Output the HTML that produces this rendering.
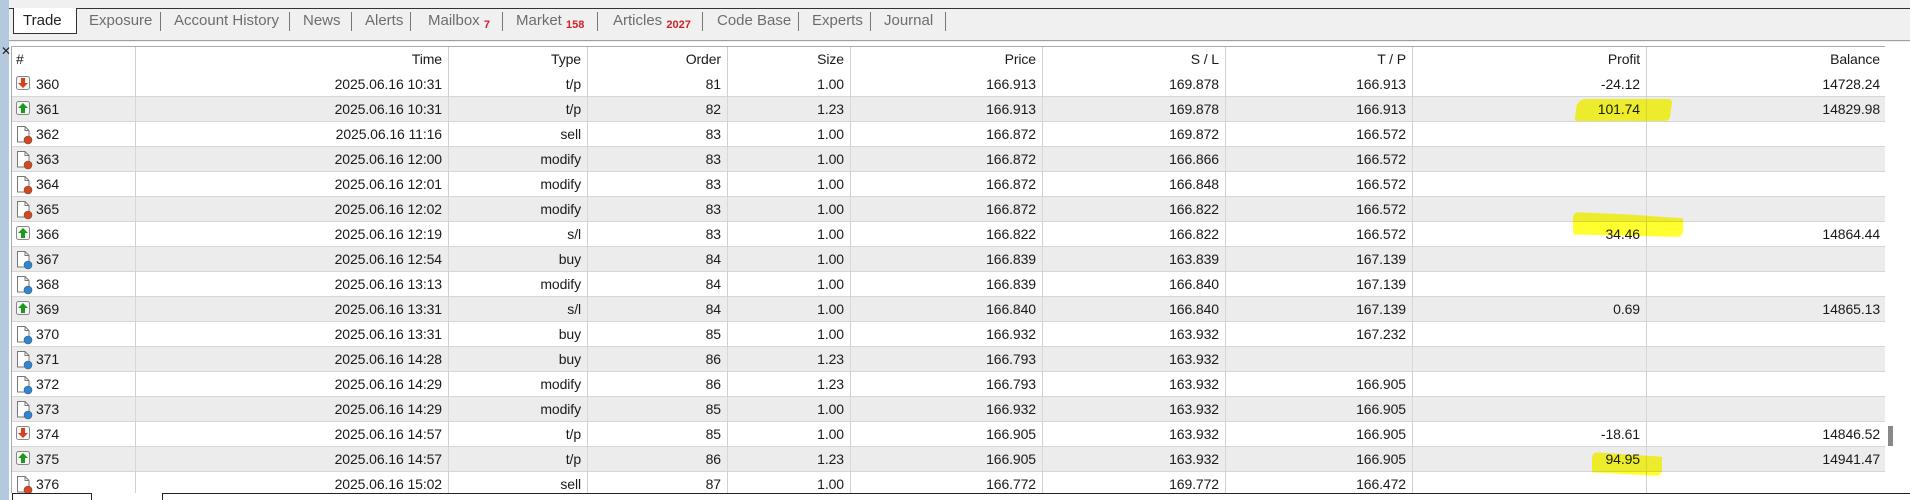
<!DOCTYPE html>
<html><head><meta charset="utf-8">
<style>
*{margin:0;padding:0;box-sizing:border-box}
body{width:1910px;height:500px;overflow:hidden;background:#fff;position:relative;font-family:"Liberation Sans",sans-serif;font-size:14px;color:#1a1a1a}
.strip{position:absolute;left:0;top:0;width:9px;height:500px;background:#b4c8de}
.tabbar{position:absolute;left:9px;top:0;width:1901px;height:42px;background:#f0f0f0}
.tabline{position:absolute;left:9px;top:8px;width:1901px;height:1px;background:#333}
.tabline2{position:absolute;left:9px;top:40px;width:1901px;height:1px;background:#a0a0a0}
.tab{position:absolute;top:12px;color:#6d6d6d;font-size:15px}
.tab sub{color:#d0202a;font-weight:bold;font-size:11px;vertical-align:-3px}
.sep{position:absolute;top:12px;width:1px;height:19px;background:#777}
.trade{position:absolute;left:13px;top:8px;width:64px;height:26px;background:#fff;border:1px solid #333;border-top:none;font-size:15px;padding:4px 0 0 9px;color:#222}
.x{position:absolute;left:1px;top:44px;font-size:12px;color:#222}
.table{position:absolute;left:11px;top:46px;width:1874px;height:447px;border-left:1px solid #aaa;border-top:1px solid #aaa;overflow:hidden}
.row{position:absolute;left:0;width:1874px;height:25px;border-bottom:1px solid #d6d6d6}
.row.g{background:#ececec}
.c{position:absolute;top:0;height:25px;line-height:24px;text-align:right;padding-right:6px;white-space:nowrap;letter-spacing:-0.1px}
.vl{position:absolute;top:0;width:1px;height:447px;background:#d0d0d0}
.hl{position:absolute;background:#ffff30;mix-blend-mode:multiply}
.icon{position:absolute;left:4px;top:4px}
.sb{position:absolute;left:1888px;top:426px;width:5px;height:20px;background:#888}
</style></head><body>
<div class="strip"></div>
<div class="tabbar"></div>
<div class="tabline"></div>
<div class="tabline2"></div>
<div class="trade">Trade</div>
<div class="tab" style="left:89px">Exposure</div>
<div class="sep" style="left:160px"></div>
<div class="tab" style="left:174px">Account History</div>
<div class="sep" style="left:289px"></div>
<div class="tab" style="left:303px">News</div>
<div class="sep" style="left:351px"></div>
<div class="tab" style="left:365px">Alerts</div>
<div class="sep" style="left:410px"></div>
<div class="tab" style="left:428px">Mailbox <sub>7</sub></div>
<div class="sep" style="left:502px"></div>
<div class="tab" style="left:516px">Market <sub>158</sub></div>
<div class="sep" style="left:597px"></div>
<div class="tab" style="left:613px">Articles <sub>2027</sub></div>
<div class="sep" style="left:702px"></div>
<div class="tab" style="left:717px">Code Base</div>
<div class="sep" style="left:798px"></div>
<div class="tab" style="left:812px">Experts</div>
<div class="sep" style="left:870px"></div>
<div class="tab" style="left:884px">Journal</div>
<div class="sep" style="left:945px"></div>
<div class="x">✕</div>
<div class="sb"></div>
<div style="position:absolute;left:12px;top:493px;width:80px;height:7px;border:1px solid #222;border-bottom:none"></div>
<div style="position:absolute;left:162px;top:493px;width:1748px;height:7px;border-top:1px solid #222;border-left:1px solid #222"></div>

<div class="table" id="t"></div>
<script>
const cols=[[0,123],[123,436],[436,575],[575,715],[715,838],[838,1030],[1030,1213],[1213,1400],[1400,1634],[1634,1874]];
const rows=[
["360","d","2025.06.16 10:31","t/p","81","1.00","166.913","169.878","166.913","-24.12","14728.24"],
["361","u","2025.06.16 10:31","t/p","82","1.23","166.913","169.878","166.913","101.74","14829.98"],
["362","r","2025.06.16 11:16","sell","83","1.00","166.872","169.872","166.572","",""],
["363","r","2025.06.16 12:00","modify","83","1.00","166.872","166.866","166.572","",""],
["364","r","2025.06.16 12:01","modify","83","1.00","166.872","166.848","166.572","",""],
["365","r","2025.06.16 12:02","modify","83","1.00","166.872","166.822","166.572","",""],
["366","u","2025.06.16 12:19","s/l","83","1.00","166.822","166.822","166.572","34.46","14864.44"],
["367","b","2025.06.16 12:54","buy","84","1.00","166.839","163.839","167.139","",""],
["368","b","2025.06.16 13:13","modify","84","1.00","166.839","166.840","167.139","",""],
["369","u","2025.06.16 13:31","s/l","84","1.00","166.840","166.840","167.139","0.69","14865.13"],
["370","b","2025.06.16 13:31","buy","85","1.00","166.932","163.932","167.232","",""],
["371","b","2025.06.16 14:28","buy","86","1.23","166.793","163.932","","",""],
["372","b","2025.06.16 14:29","modify","86","1.23","166.793","163.932","166.905","",""],
["373","b","2025.06.16 14:29","modify","85","1.00","166.932","163.932","166.905","",""],
["374","d","2025.06.16 14:57","t/p","85","1.00","166.905","163.932","166.905","-18.61","14846.52"],
["375","u","2025.06.16 14:57","t/p","86","1.23","166.905","163.932","166.905","94.95","14941.47"],
["376","r","2025.06.16 15:02","sell","87","1.00","166.772","169.772","166.472","",""]];
function icon(k){
 if(k=="u"||k=="d"){
  const col=k=="u"?"#1a9a1a":"#d8401c";
  const p=k=="u"?"M7 2 L12 7 L9 7 L9 12 L5 12 L5 7 L2 7Z":"M7 12 L12 7 L9 7 L9 2 L5 2 L5 7 L2 7Z";
  return `<svg class="icon" width="15" height="15" viewBox="0 0 15 15"><rect x="0.5" y="0.5" width="13" height="13" rx="2" fill="#f6f6f6" stroke="#888"/><path d="${p}" fill="${col}"/></svg>`;
 }
 const c=k=="r"?"#d9451c":"#2a86d8";
 return `<svg class="icon" style="top:3px" width="18" height="20" viewBox="0 0 18 20"><path d="M1.5 1.5 H9 L13 5.5 V17 H1.5Z" fill="#fff" stroke="#777"/><path d="M9 1.5 V5.5 H13" fill="none" stroke="#777"/><circle cx="12" cy="15" r="4" fill="${c}" stroke="#555" stroke-width=".6"/></svg>`;
}
let h='';
cols.forEach(c=>{if(c[0]>0)h+=`<div class="vl" style="left:${c[0]}px"></div>`});
const hd=["#","Time","Type","Order","Size","Price","S / L","T / P","Profit","Balance"];
h+=`<div class="row" style="top:0;border-bottom:none">`;
hd.forEach((t,i)=>{h+= i==0?`<div class="c" style="left:4px;text-align:left">#</div>`:`<div class="c" style="left:${cols[i][0]}px;width:${cols[i][1]-cols[i][0]}px">${t}</div>`});
h+=`</div>`;
rows.forEach((r,j)=>{
 h+=`<div class="row${j%2?' g':''}" style="top:${25+j*25}px">${icon(r[1])}<div class="c" style="left:24px;text-align:left">${r[0]}</div>`;
 for(let i=1;i<10;i++){const v=r[i+1];if(v)h+=`<div class="c" style="left:${cols[i][0]}px;width:${cols[i][1]-cols[i][0]}px">${v}</div>`}
 h+=`</div>`;
});
h+=cols.slice(1).map(c=>`<div class="vl" style="left:${c[0]}px;top:25px;height:422px;opacity:.7"></div>`).join('');
document.getElementById('t').innerHTML=h;
</script>
<div class="hl" style="left:1576px;top:99px;width:95px;height:22px;border-radius:8px 4px 4px 3px;transform:skewX(-8deg)"></div>
<div class="hl" style="left:1573px;top:212px;width:110px;height:25px;border-radius:6px;clip-path:polygon(0 0,50% 10%,100% 25%,100% 100%,0 90%)"></div>
<div class="hl" style="left:1592px;top:452px;width:70px;height:24px;border-radius:6px;clip-path:polygon(0 0,100% 20%,100% 100%,0 85%)"></div>
</body></html>
